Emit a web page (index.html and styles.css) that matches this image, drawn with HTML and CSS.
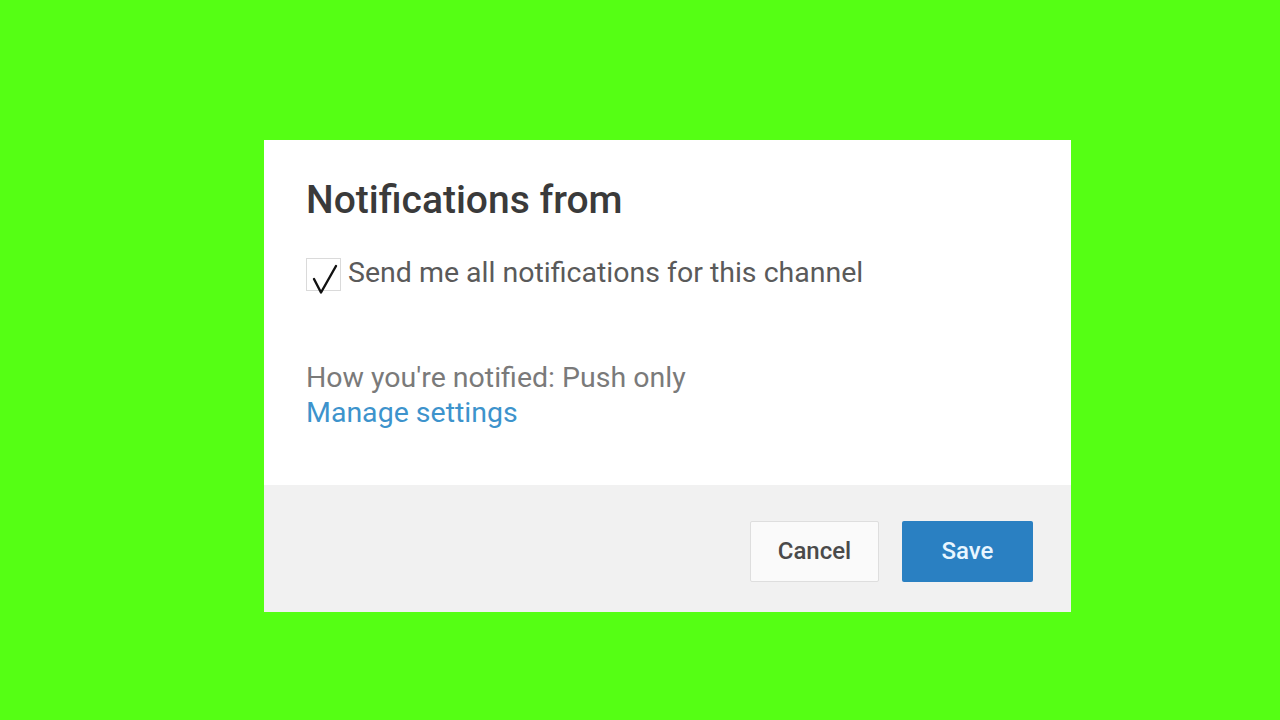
FILE: index.html
```html
<!DOCTYPE html>
<html>
<head>
<meta charset="utf-8">
<link rel="stylesheet" href="styles.css">
</head>
<body>
<div class="stage">
  <div class="dialog">
    <div class="content">
      <h1 class="title">Notifications from</h1>
      <label class="check-row">
        <span class="checkbox">
          <svg class="tick" viewBox="0 0 40 40" width="40" height="40"><path d="M8 21 L15 34.5 L30 8" fill="none" stroke="#111" stroke-width="2.4" stroke-linecap="round" stroke-linejoin="round"/></svg>
        </span>
        <span class="check-text">Send me all notifications for this channel</span>
      </label>
      <div class="how">How you're notified: Push only</div>
      <a class="manage">Manage settings</a>
    </div>
    <div class="footer">
      <button class="btn cancel">Cancel</button>
      <button class="btn save">Save</button>
    </div>
  </div>
</div>
</body>
</html>
```

FILE: styles.css
```css
html, body {
  margin: 0;
  padding: 0;
  background: #55ff14;
  width: 1280px;
  height: 720px;
  overflow: hidden;
}
.stage {
  padding: 140px 0 0 264px;
}
.dialog {
  width: 807px;
  height: 472px;
  background: #ffffff;
  display: flex;
  flex-direction: column;
  font-family: Roboto, "Liberation Sans", sans-serif;
}
.content {
  flex: 1;
  padding: 37px 42px 0 42px;
}
.title {
  margin: 0;
  font-size: 39px;
  font-weight: 500;
  color: #3a3a3a;
  line-height: 46px;
}
.check-row {
  display: flex;
  align-items: flex-start;
  margin-top: 33px;
  gap: 7px;
}
.checkbox {
  position: relative;
  width: 35px;
  height: 33px;
  margin-top: 2px;
  border: 1px solid #dadada;
  box-sizing: border-box;
  flex: none;
}
.tick {
  position: absolute;
  left: -1px;
  top: -1px;
  overflow: visible;
}
.check-text {
  font-size: 28.5px;
  color: #5a5a5a;
  line-height: 34px;
}
.how {
  margin-top: 70px;
  font-size: 28.5px;
  color: #7a7a7a;
  line-height: 34px;
}
.manage {
  display: block;
  margin-top: 1px;
  font-size: 28.5px;
  color: #3d93cc;
  line-height: 34px;
}
.footer {
  height: 127px;
  background: #f1f1f1;
  display: flex;
  align-items: center;
  justify-content: flex-end;
  gap: 23px;
  padding: 5px 38px 0 0;
  box-sizing: border-box;
}
.btn {
  height: 61px;
  font-family: Roboto, "Liberation Sans", sans-serif;
  font-size: 24px;
  font-weight: 500;
  border-radius: 2px;
  box-sizing: border-box;
}
.cancel {
  width: 129px;
  background: #fafafa;
  border: 1px solid #dedede;
  color: #4a4a4a;
}
.save {
  width: 131px;
  background: #2a80c2;
  border: none;
  color: #e8f6ff;
}
```
